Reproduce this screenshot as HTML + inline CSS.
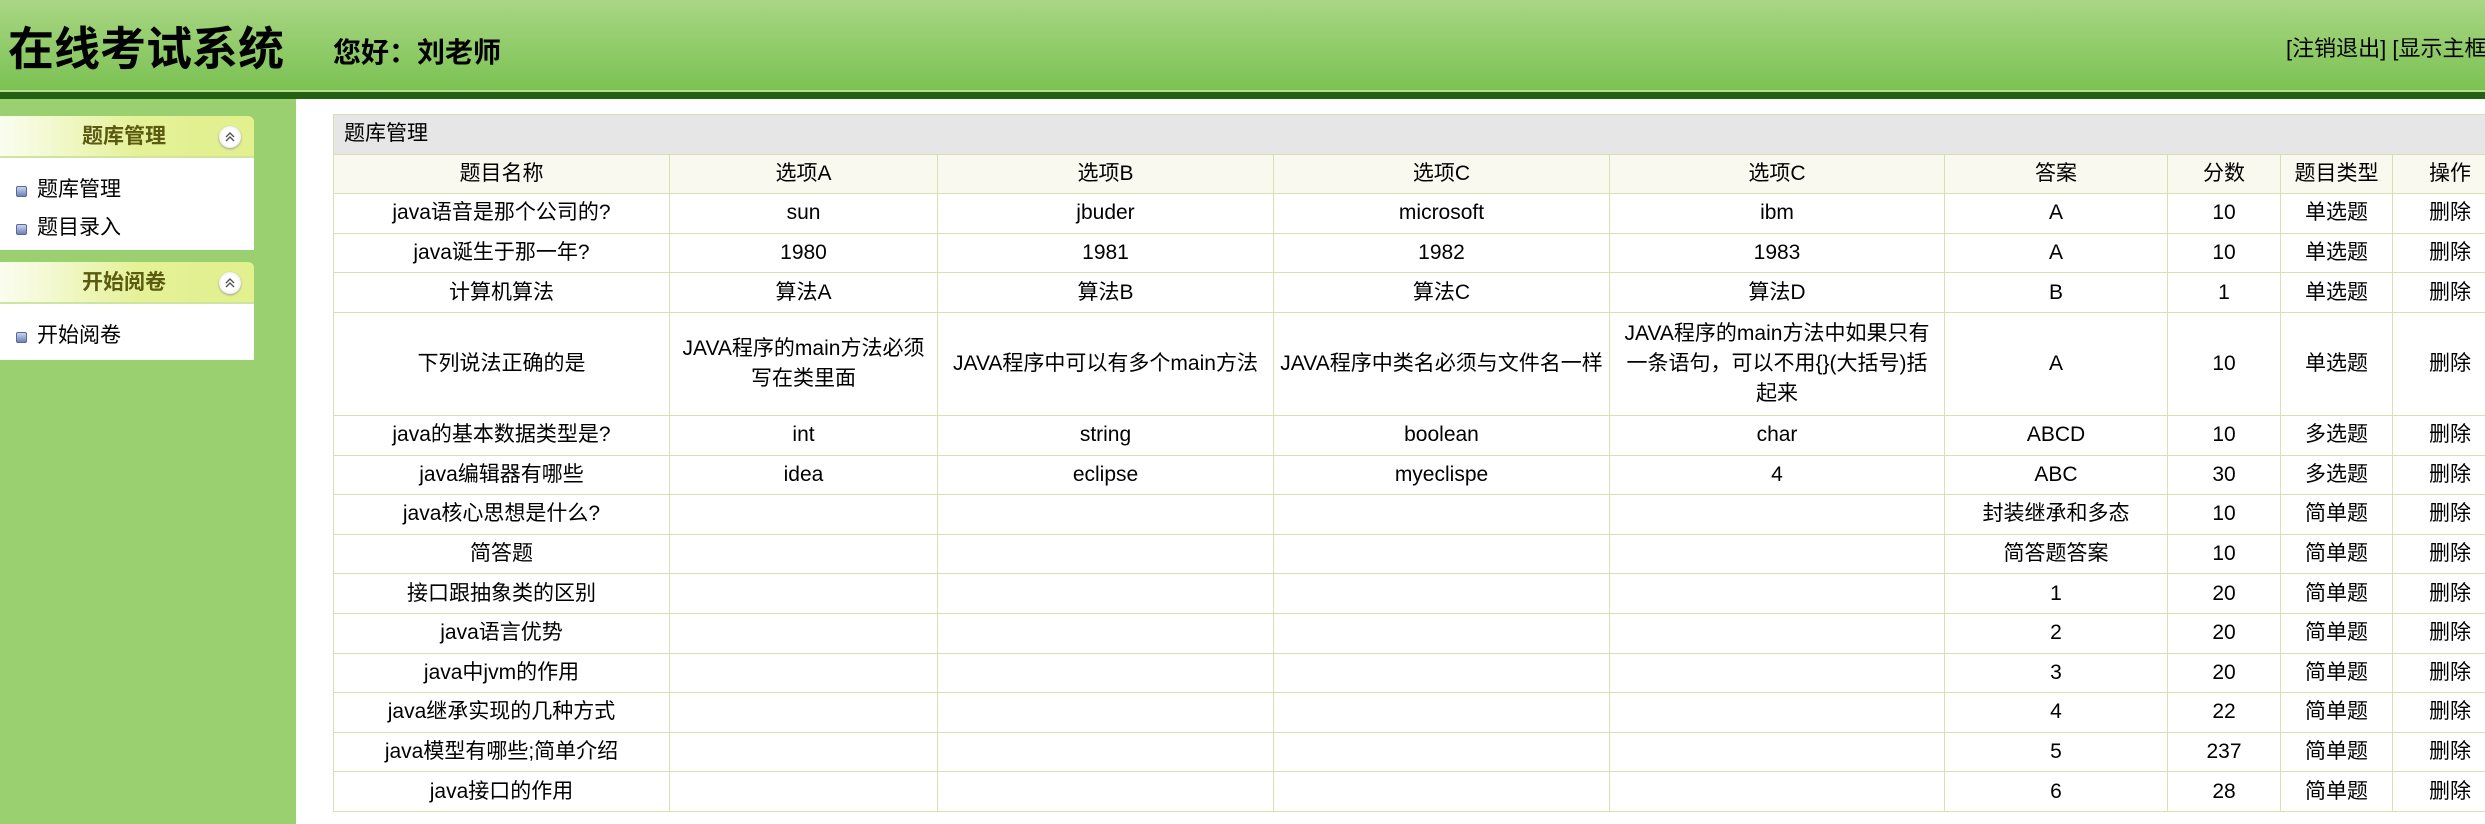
<!DOCTYPE html>
<html><head><meta charset="utf-8"><style>
*{margin:0;padding:0;box-sizing:border-box}
html,body{width:2485px;height:824px;overflow:hidden;background:#fff;font-family:"Liberation Sans","Noto Sans CJK SC",sans-serif;color:#000}
#hd{position:absolute;left:0;top:0;width:2485px;height:90px;background:linear-gradient(#a9d684,#7bc253)}
#hl{position:absolute;left:0;top:90px;width:2485px;height:3px;background:#b6df95}
#hb{position:absolute;left:0;top:92px;width:2485px;height:7px;background:#236012}
#t1{position:absolute;left:8px;top:19px;font-size:46px;font-weight:bold;line-height:60px}
#t2{position:absolute;left:333px;top:33px;font-size:28px;font-weight:bold;line-height:40px}
#t3{position:absolute;left:2286px;top:32px;font-size:22px;line-height:34px;white-space:nowrap}
#sb{position:absolute;left:0;top:99px;width:296px;height:725px;background:#9bd070}
.pt{position:absolute;left:0;width:254px;height:42px;background:linear-gradient(90deg,#fbfdf0,#e4f196 55%,#e2f08e);border-bottom:2px solid #cfe4a0;font-size:21px;font-weight:bold;color:#5a5a10;line-height:42px;text-align:left;padding-left:82px;border-radius:0 6px 0 0}
.ic{position:absolute;left:219px;top:10px;width:22px;height:22px;border-radius:50%;background:radial-gradient(#fff 50%,#ddd);box-shadow:0 1px 2px #999}
.ic svg{position:absolute;left:6px;top:5px}
.pc{position:absolute;left:0;width:254px;background:#fff}
.it{position:absolute;left:16px;font-size:21px;line-height:30px;padding-left:21px}
.it:before{content:"";position:absolute;left:0;top:11px;width:9px;height:9px;background:linear-gradient(#c8d4f0,#6d82b8);border:1px solid #5a6a90;border-radius:2px}
#tb{position:absolute;left:333px;top:114px;border-collapse:collapse;table-layout:fixed;width:2250px;font-size:21px}
#tb td{border:1px solid #d8e0b2;text-align:center;vertical-align:middle;height:39.6px;padding:0 9px;line-height:30px;overflow:hidden}
#tb tr.cap td{background:#e6e6e6;text-align:left;padding-left:10px;height:39.6px}
#tb tr.h td{background:#f9f9f0;height:39.6px}
#tb td.o{text-align:left;padding-left:36px}
</style></head><body>
<div id="hd"></div><div id="hl"></div><div id="hb"></div>
<div id="t1">在线考试系统</div>
<div id="t2">您好：刘老师</div>
<div id="t3">[注销退出] [显示主框架]</div>
<div id="sb"></div>
<div class="pt" style="top:116px">题库管理<div class="ic"><svg width="10" height="12" viewBox="0 0 10 12"><path d="M1 6 L5 2 L9 6 M1 10 L5 6 L9 10" fill="none" stroke="#555" stroke-width="1.4"/></svg></div></div>
<div class="pc" style="top:158px;height:92px"><div class="it" style="top:17px">题库管理</div><div class="it" style="top:55px">题目录入</div></div>
<div class="pt" style="top:262px">开始阅卷<div class="ic"><svg width="10" height="12" viewBox="0 0 10 12"><path d="M1 6 L5 2 L9 6 M1 10 L5 6 L9 10" fill="none" stroke="#555" stroke-width="1.4"/></svg></div></div>
<div class="pc" style="top:304px;height:56px"><div class="it" style="top:17px">开始阅卷</div></div>
<table id="tb">
<colgroup><col style="width:336px"><col style="width:268px"><col style="width:336px"><col style="width:336px"><col style="width:335px"><col style="width:223px"><col style="width:113px"><col style="width:112px"><col style="width:191px"></colgroup>
<tr class="cap"><td colspan="9">题库管理</td></tr>
<tr class="h"><td>题目名称</td><td>选项A</td><td>选项B</td><td>选项C</td><td>选项C</td><td>答案</td><td>分数</td><td>题目类型</td><td class="o">操作</td></tr>
<tr><td>java语音是那个公司的?</td><td>sun</td><td>jbuder</td><td>microsoft</td><td>ibm</td><td>A</td><td>10</td><td>单选题</td><td class="o">删除</td></tr>
<tr><td>java诞生于那一年?</td><td>1980</td><td>1981</td><td>1982</td><td>1983</td><td>A</td><td>10</td><td>单选题</td><td class="o">删除</td></tr>
<tr><td>计算机算法</td><td>算法A</td><td>算法B</td><td>算法C</td><td>算法D</td><td>B</td><td>1</td><td>单选题</td><td class="o">删除</td></tr>
<tr><td style="height:103px">下列说法正确的是</td><td>JAVA程序的main方法必须写在类里面</td><td style="padding:0 2px">JAVA程序中可以有多个main方法</td><td style="padding:0 2px">JAVA程序中类名必须与文件名一样</td><td style="padding:0 12px">JAVA程序的main方法中如果只有一条语句，可以不用{}(大括号)括起来</td><td>A</td><td>10</td><td>单选题</td><td class="o">删除</td></tr>
<tr><td>java的基本数据类型是?</td><td>int</td><td>string</td><td>boolean</td><td>char</td><td>ABCD</td><td>10</td><td>多选题</td><td class="o">删除</td></tr>
<tr><td>java编辑器有哪些</td><td>idea</td><td>eclipse</td><td>myeclispe</td><td>4</td><td>ABC</td><td>30</td><td>多选题</td><td class="o">删除</td></tr>
<tr><td>java核心思想是什么?</td><td></td><td></td><td></td><td></td><td>封装继承和多态</td><td>10</td><td>简单题</td><td class="o">删除</td></tr>
<tr><td>简答题</td><td></td><td></td><td></td><td></td><td>简答题答案</td><td>10</td><td>简单题</td><td class="o">删除</td></tr>
<tr><td>接口跟抽象类的区别</td><td></td><td></td><td></td><td></td><td>1</td><td>20</td><td>简单题</td><td class="o">删除</td></tr>
<tr><td>java语言优势</td><td></td><td></td><td></td><td></td><td>2</td><td>20</td><td>简单题</td><td class="o">删除</td></tr>
<tr><td>java中jvm的作用</td><td></td><td></td><td></td><td></td><td>3</td><td>20</td><td>简单题</td><td class="o">删除</td></tr>
<tr><td>java继承实现的几种方式</td><td></td><td></td><td></td><td></td><td>4</td><td>22</td><td>简单题</td><td class="o">删除</td></tr>
<tr><td>java模型有哪些;简单介绍</td><td></td><td></td><td></td><td></td><td>5</td><td>237</td><td>简单题</td><td class="o">删除</td></tr>
<tr><td>java接口的作用</td><td></td><td></td><td></td><td></td><td>6</td><td>28</td><td>简单题</td><td class="o">删除</td></tr>
</table>
</body></html>
